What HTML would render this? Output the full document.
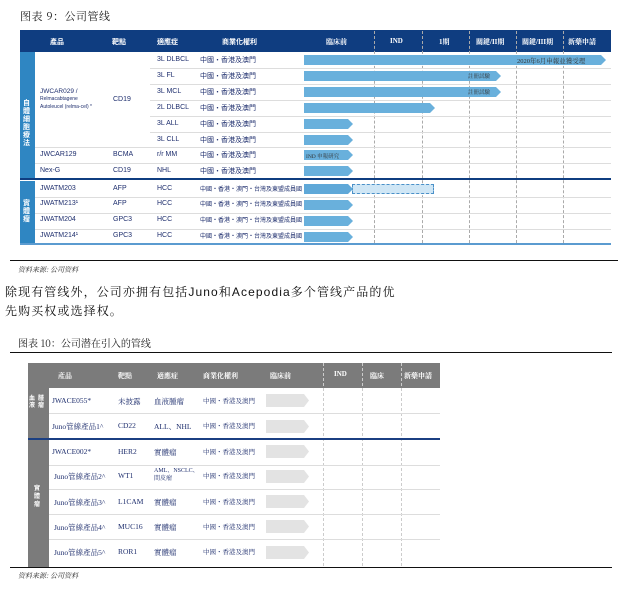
<!DOCTYPE html>
<html><head><meta charset="utf-8"><style>
*{margin:0;padding:0;box-sizing:border-box}
body{width:618px;height:592px;background:#fff;position:relative;overflow:hidden;font-family:"Liberation Sans","Noto Sans CJK TC",sans-serif}
.a{position:absolute;white-space:nowrap}
.t{font-size:7px;color:#1f2f6e}
.s{font-family:"Liberation Serif","Noto Serif CJK SC",serif}
.h1{background:#0f3d80;color:#fff;font-size:7px;font-weight:bold}
.bar{position:absolute;background:#69b0dc;height:10px;clip-path:polygon(0 0,calc(100% - 5px) 0,100% 50%,calc(100% - 5px) 100%,0 100%)}
.gb{position:absolute;background:#e3e3e3;height:13px;width:43px;left:266px;clip-path:polygon(0 0,38px 0,43px 50%,38px 100%,0 100%)}
.hl{position:absolute;height:1px;background:#ddd}
.vd{position:absolute;width:0;border-left:1px dashed #aaa}
.vd2{position:absolute;width:0;border-left:1px dashed #ccc}
</style></head><body>
<div class="a" style="left:20px;top:8px;font-size:11px;color:#222;letter-spacing:0.5px;font-family:'Noto Serif CJK SC',serif">图表 9：公司管线</div>

<div class="a h1" style="left:20px;top:30px;width:591px;height:22px"></div>
<div class="a h1" style="left:50px;top:37px">產品</div>
<div class="a h1" style="left:112px;top:37px">靶點</div>
<div class="a h1" style="left:157px;top:37px">適應症</div>
<div class="a h1" style="left:222px;top:37px">商業化權利</div>
<div class="a h1 s" style="left:326px;top:37px">臨床前</div>
<div class="a h1 s" style="left:390px;top:37px">IND</div>
<div class="a h1 s" style="left:439px;top:37px">1期</div>
<div class="a h1 s" style="left:476px;top:37px">關鍵/II期</div>
<div class="a h1 s" style="left:522px;top:37px">關鍵/III期</div>
<div class="a h1 s" style="left:568px;top:37px">新藥申請</div>
<div class="vd" style="left:374px;top:31px;height:212px"></div>
<div class="vd" style="left:422px;top:31px;height:212px"></div>
<div class="vd" style="left:469px;top:31px;height:212px"></div>
<div class="vd" style="left:516px;top:31px;height:212px"></div>
<div class="vd" style="left:563px;top:31px;height:212px"></div>
<div class="a" style="left:20px;top:52px;width:15px;height:127px;background:#2f86c2"></div>
<div class="a" style="left:20px;top:181px;width:15px;height:63px;background:#2f86c2"></div>
<div class="a" style="left:23px;top:100px;width:9px;font-size:7px;color:#fff;white-space:normal;line-height:8px;font-weight:bold">自體細胞療法</div>
<div class="a" style="left:23px;top:200px;width:9px;font-size:7px;color:#fff;white-space:normal;line-height:8px;font-weight:bold">實體瘤</div>
<div class="hl" style="left:150px;top:68px;width:461px"></div>
<div class="hl" style="left:150px;top:84px;width:461px"></div>
<div class="hl" style="left:150px;top:100px;width:461px"></div>
<div class="hl" style="left:150px;top:116px;width:461px"></div>
<div class="hl" style="left:150px;top:132px;width:461px"></div>
<div class="hl" style="left:35px;top:147px;width:576px"></div>
<div class="hl" style="left:35px;top:163px;width:576px"></div>
<div class="a" style="left:20px;top:178px;width:591px;height:2px;background:#0f3d80"></div>
<div class="hl" style="left:35px;top:197px;width:576px"></div>
<div class="hl" style="left:35px;top:213px;width:576px"></div>
<div class="hl" style="left:35px;top:229px;width:576px"></div>
<div class="a" style="left:20px;top:243px;width:591px;height:2px;background:#5b9bd0"></div>
<div class="a t" style="left:40px;top:88px;line-height:7px;font-size:6.5px">JWCAR029 /<br><span style="font-size:5px">Relmacabtagene<br>Autoleucel (relma-cel) *</span></div>
<div class="a t" style="left:113px;top:96px">CD19</div>
<div class="a t" style="left:157px;top:56px">3L DLBCL</div>
<div class="a t" style="left:157px;top:72px">3L FL</div>
<div class="a t" style="left:157px;top:88px">3L MCL</div>
<div class="a t" style="left:157px;top:104px">2L DLBCL</div>
<div class="a t" style="left:157px;top:120px">3L ALL</div>
<div class="a t" style="left:157px;top:136px">3L CLL</div>
<div class="a t" style="left:200px;top:55px">中國・香港及澳門</div>
<div class="a t" style="left:200px;top:71px">中國・香港及澳門</div>
<div class="a t" style="left:200px;top:87px">中國・香港及澳門</div>
<div class="a t" style="left:200px;top:103px">中國・香港及澳門</div>
<div class="a t" style="left:200px;top:119px">中國・香港及澳門</div>
<div class="a t" style="left:200px;top:135px">中國・香港及澳門</div>
<div class="a t" style="left:40px;top:151px">JWCAR129</div><div class="a t" style="left:113px;top:151px">BCMA</div><div class="a t" style="left:157px;top:151px">r/r MM</div><div class="a t" style="left:200px;top:150px">中國・香港及澳門</div>
<div class="a t" style="left:40px;top:167px">Nex-G</div><div class="a t" style="left:113px;top:167px">CD19</div><div class="a t" style="left:157px;top:167px">NHL</div><div class="a t" style="left:200px;top:166px">中國・香港及澳門</div>
<div class="a t" style="left:40px;top:185px">JWATM203</div><div class="a t" style="left:113px;top:185px">AFP</div><div class="a t" style="left:157px;top:185px">HCC</div><div class="a t" style="left:200px;top:184px;font-size:6px">中國・香港・澳門・台灣及東盟成員國</div>
<div class="a t" style="left:40px;top:200px">JWATM213¹</div><div class="a t" style="left:113px;top:200px">AFP</div><div class="a t" style="left:157px;top:200px">HCC</div><div class="a t" style="left:200px;top:199px;font-size:6px">中國・香港・澳門・台灣及東盟成員國</div>
<div class="a t" style="left:40px;top:216px">JWATM204</div><div class="a t" style="left:113px;top:216px">GPC3</div><div class="a t" style="left:157px;top:216px">HCC</div><div class="a t" style="left:200px;top:215px;font-size:6px">中國・香港・澳門・台灣及東盟成員國</div>
<div class="a t" style="left:40px;top:232px">JWATM214¹</div><div class="a t" style="left:113px;top:232px">GPC3</div><div class="a t" style="left:157px;top:232px">HCC</div><div class="a t" style="left:200px;top:231px;font-size:6px">中國・香港・澳門・台灣及東盟成員國</div>
<div class="bar" style="left:304px;top:55px;width:302px"></div>
<div class="a s" style="left:517px;top:56px;font-size:6.5px;color:#333">2020年6月申報並獲受理</div>
<div class="bar" style="left:304px;top:71px;width:197px"></div>
<div class="a s" style="left:468px;top:72px;font-size:5.5px;color:#333">註冊試驗</div>
<div class="bar" style="left:304px;top:87px;width:197px"></div>
<div class="a s" style="left:468px;top:88px;font-size:5.5px;color:#333">註冊試驗</div>
<div class="bar" style="left:304px;top:103px;width:131px"></div>
<div class="bar" style="left:304px;top:119px;width:49px"></div>
<div class="bar" style="left:304px;top:135px;width:49px"></div>
<div class="bar" style="left:304px;top:150px;width:49px"></div>
<div class="a s" style="left:306px;top:152px;font-size:5.5px;color:#333">IND 申報研究</div>
<div class="bar" style="left:304px;top:166px;width:49px"></div>
<div class="a" style="left:352px;top:184px;width:82px;height:10px;background:#cfe6f5;border:1px dashed #4a90c8"></div>
<div class="bar" style="left:304px;top:184px;width:49px;background:#5fa8d8"></div>
<div class="bar" style="left:304px;top:200px;width:49px"></div>
<div class="bar" style="left:304px;top:216px;width:49px"></div>
<div class="bar" style="left:304px;top:232px;width:49px"></div>

<div class="a" style="left:10px;top:260px;width:608px;height:1px;background:#111"></div>
<div class="a" style="left:18px;top:265px;font-size:7px;font-style:italic;color:#222;font-family:'Noto Serif CJK SC',serif">资料来源: 公司资料</div>
<div class="a" style="left:5px;top:283px;font-size:12px;color:#111;font-family:'Liberation Sans','Noto Serif CJK SC',serif;letter-spacing:1.1px">除现有管线外，公司亦拥有包括Juno和Acepodia多个管线产品的优</div>
<div class="a" style="left:5px;top:302px;font-size:12px;color:#111;font-family:'Noto Serif CJK SC',serif;letter-spacing:1.1px">先购买权或选择权。</div>
<div class="a" style="left:18px;top:335px;font-size:10px;color:#222;letter-spacing:0px;font-family:'Noto Serif CJK SC',serif">图表 10：公司潜在引入的管线</div>
<div class="a" style="left:10px;top:352px;width:602px;height:1px;background:#111"></div>

<div class="a" style="left:28px;top:363px;width:412px;height:25px;background:#7b7b7b"></div>
<div class="a s" style="left:58px;top:371px;font-size:7px;color:#fff;font-weight:bold">產品</div>
<div class="a s" style="left:118px;top:371px;font-size:7px;color:#fff;font-weight:bold">靶點</div>
<div class="a s" style="left:157px;top:371px;font-size:7px;color:#fff;font-weight:bold">適應症</div>
<div class="a s" style="left:203px;top:371px;font-size:7px;color:#fff;font-weight:bold">商業化權利</div>
<div class="a s" style="left:270px;top:371px;font-size:7px;color:#fff;font-weight:bold">臨床前</div>
<div class="a s" style="left:334px;top:370px;font-size:7px;color:#fff;font-weight:bold">IND</div>
<div class="a s" style="left:370px;top:371px;font-size:7px;color:#fff;font-weight:bold">臨床</div>
<div class="a s" style="left:404px;top:371px;font-size:7px;color:#fff;font-weight:bold">新藥申請</div>
<div class="vd2" style="left:323px;top:363px;height:203px"></div>
<div class="vd2" style="left:362px;top:363px;height:203px"></div>
<div class="vd2" style="left:401px;top:363px;height:203px"></div>
<div class="a" style="left:28px;top:388px;width:21px;height:50px;background:#7b7b7b"></div>
<div class="a" style="left:28px;top:440px;width:21px;height:127px;background:#7b7b7b"></div>
<div class="a" style="left:29px;top:396px;width:9px;font-size:6px;color:#fff;white-space:normal;line-height:7px;font-weight:bold">血液</div>
<div class="a" style="left:38px;top:396px;width:9px;font-size:6px;color:#fff;white-space:normal;line-height:7px;font-weight:bold">腫瘤</div>
<div class="a" style="left:34px;top:485px;width:9px;font-size:6px;color:#fff;white-space:normal;line-height:8px;font-weight:bold">實體瘤</div>
<div class="hl" style="left:49px;top:413px;width:391px"></div>
<div class="a" style="left:28px;top:438px;width:412px;height:2px;background:#1b3f82"></div>
<div class="hl" style="left:49px;top:465px;width:391px"></div>
<div class="hl" style="left:49px;top:489px;width:391px"></div>
<div class="hl" style="left:49px;top:514px;width:391px"></div>
<div class="hl" style="left:49px;top:539px;width:391px"></div>
<div class="a" style="left:10px;top:567px;width:602px;height:1px;background:#111"></div>
<div class="a s t" style="left:52px;top:396px;font-size:7.5px">JWACE055*</div><div class="a s t" style="left:118px;top:396px;font-size:7.5px">未披露</div><div class="a s t" style="left:154px;top:396px;font-size:7.5px">血液腫瘤</div><div class="a s t" style="left:203px;top:396px;font-size:6.5px">中國・香港及澳門</div>
<div class="a s t" style="left:52px;top:421px;font-size:7.5px">Juno管線產品1^</div><div class="a s t" style="left:118px;top:421px;font-size:7.5px">CD22</div><div class="a s t" style="left:154px;top:421px;font-size:7.5px">ALL、NHL</div><div class="a s t" style="left:203px;top:421px;font-size:6.5px">中國・香港及澳門</div>
<div class="a s t" style="left:52px;top:447px;font-size:7.5px">JWACE002*</div><div class="a s t" style="left:118px;top:447px;font-size:7.5px">HER2</div><div class="a s t" style="left:154px;top:447px;font-size:7.5px">實體瘤</div><div class="a s t" style="left:203px;top:447px;font-size:6.5px">中國・香港及澳門</div>
<div class="a s t" style="left:54px;top:471px;font-size:7.5px">Juno管線產品2^</div><div class="a s t" style="left:118px;top:471px;font-size:7.5px">WT1</div><div class="a s t" style="left:154px;top:467px;font-size:6px;line-height:8px">AML、NSCLC、<br>間皮瘤</div><div class="a s t" style="left:203px;top:471px;font-size:6.5px">中國・香港及澳門</div>
<div class="a s t" style="left:54px;top:497px;font-size:7.5px">Juno管線產品3^</div><div class="a s t" style="left:118px;top:497px;font-size:7.5px">L1CAM</div><div class="a s t" style="left:154px;top:497px;font-size:7.5px">實體瘤</div><div class="a s t" style="left:203px;top:497px;font-size:6.5px">中國・香港及澳門</div>
<div class="a s t" style="left:54px;top:522px;font-size:7.5px">Juno管線產品4^</div><div class="a s t" style="left:118px;top:522px;font-size:7.5px">MUC16</div><div class="a s t" style="left:154px;top:522px;font-size:7.5px">實體瘤</div><div class="a s t" style="left:203px;top:522px;font-size:6.5px">中國・香港及澳門</div>
<div class="a s t" style="left:54px;top:547px;font-size:7.5px">Juno管線產品5^</div><div class="a s t" style="left:118px;top:547px;font-size:7.5px">ROR1</div><div class="a s t" style="left:154px;top:547px;font-size:7.5px">實體瘤</div><div class="a s t" style="left:203px;top:547px;font-size:6.5px">中國・香港及澳門</div>
<div class="gb" style="top:394px"></div>
<div class="gb" style="top:420px"></div>
<div class="gb" style="top:445px"></div>
<div class="gb" style="top:470px"></div>
<div class="gb" style="top:495px"></div>
<div class="gb" style="top:520px"></div>
<div class="gb" style="top:546px"></div>
<div class="a" style="left:18px;top:571px;font-size:7px;font-style:italic;color:#222;font-family:'Noto Serif CJK SC',serif">资料来源: 公司资料</div>
</body></html>
